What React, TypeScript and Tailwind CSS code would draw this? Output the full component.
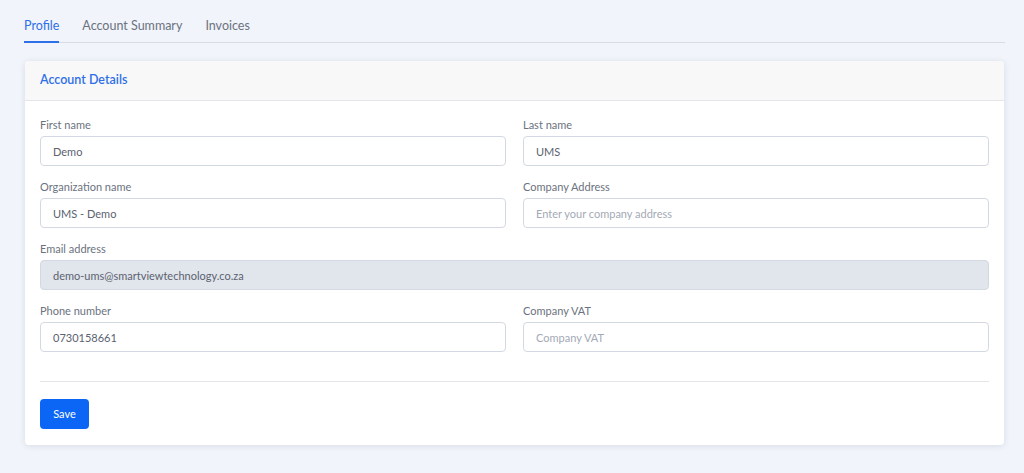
import type { ReactNode } from "react";

const TABS = ["Profile", "Account Summary", "Invoices"];

function Field({ label, children }: { label: string; children: ReactNode }) {
  return (
    <div className="flex flex-col">
      <label className="text-[11px] leading-[14px] text-[#6b7280] mb-[4px]">{label}</label>
      {children}
    </div>
  );
}

function TextInput({ value, placeholder, disabled }: { value?: string; placeholder?: string; disabled?: boolean }) {
  return (
    <input
      defaultValue={value}
      placeholder={placeholder}
      disabled={disabled}
      className={`h-[30px] w-full rounded-[4px] border border-[#d3d9e2] px-[12px] text-[11px] text-[#5b6270] placeholder:text-[#a3aab5] outline-none ${
        disabled ? "bg-[#e1e5ec]" : "bg-white"
      }`}
    />
  );
}

export default function App() {
  return (
    <div className="min-h-[473px] bg-[#f1f4fa] pl-6 pr-[19px] pt-[16px] pb-7" style={{ fontFamily: "Lato, 'Noto Sans', sans-serif" }}>
      {/* Tabs */}
      <div className="flex gap-[23px] border-b border-[#d7dce5]">
        {TABS.map((t, i) => (
          <div
            key={t}
            className={`pb-[5px] text-[12.5px] leading-[20px] -mb-px border-b-2 ${
              i === 0 ? "text-[#2f6fe8] border-[#2f6fe8]" : "text-[#6b7280] border-transparent"
            }`}
          >
            {t}
          </div>
        ))}
      </div>

      {/* Card */}
      <div className="mt-[18px] ml-px mr-px rounded-[4px] bg-white shadow-[0_1px_6px_rgba(30,50,90,0.12)]">
        <div className="h-[40px] flex items-center px-[15px] bg-[#f8f8f8] border-b border-[#e3e5e8] rounded-t-[4px]">
          <h2 className="text-[12.5px] font-semibold text-[#2f6fe8]">Account Details</h2>
        </div>

        <div className="px-[15px] pt-[17px] pb-[16px]">
          <div className="grid grid-cols-2 gap-x-[17px] gap-y-[14px]">
            <Field label="First name">
              <TextInput value="Demo" />
            </Field>
            <Field label="Last name">
              <TextInput value="UMS" />
            </Field>
            <Field label="Organization name">
              <TextInput value="UMS - Demo" />
            </Field>
            <Field label="Company Address">
              <TextInput placeholder="Enter your company address" />
            </Field>
            <div className="col-span-2">
              <Field label="Email address">
                <TextInput value="demo-ums@smartviewtechnology.co.za" disabled />
              </Field>
            </div>
            <Field label="Phone number">
              <TextInput value="0730158661" />
            </Field>
            <Field label="Company VAT">
              <TextInput placeholder="Company VAT" />
            </Field>
          </div>

          <div className="mt-[29px] border-t border-[#e3e5e8]" />

          <button className="mt-[17px] h-[30px] w-[49px] rounded-[4px] bg-[#0b66f5] text-[11px] text-white">
            Save
          </button>
        </div>
      </div>
    </div>
  );
}
